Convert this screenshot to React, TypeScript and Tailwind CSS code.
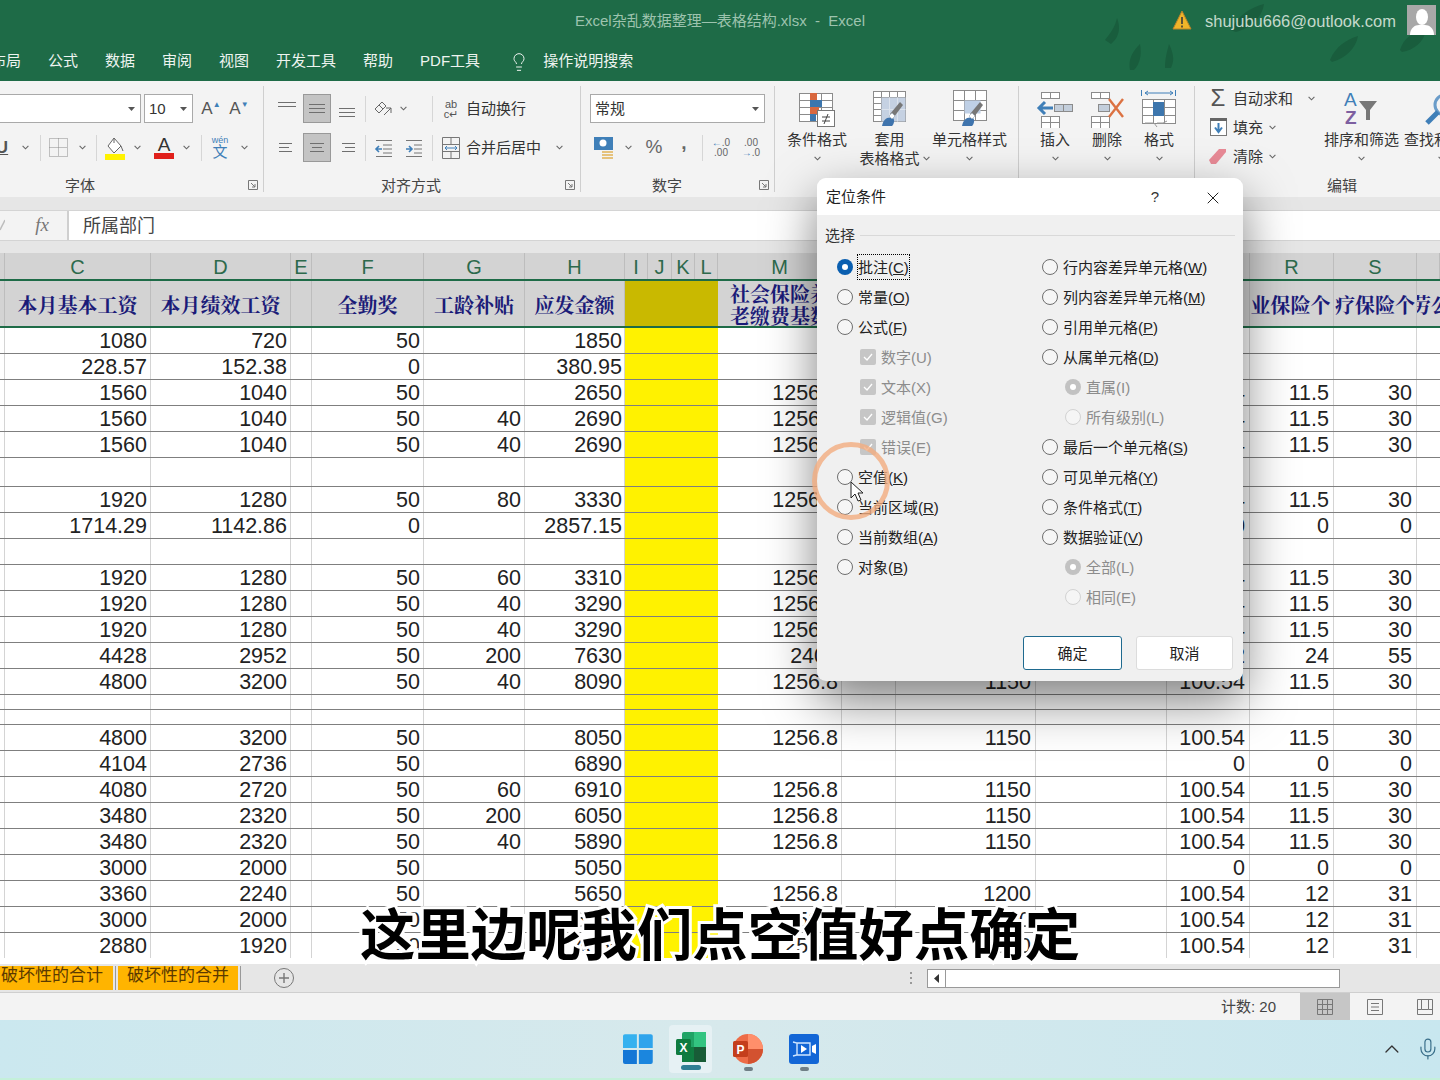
import React from "react";
import { Lightbulb, X, ChevronUp, Mic } from "lucide-react";

const Chev = ({ className = "" }: { className?: string }) => (
    <span className={`flex h-full w-[14px] shrink-0 items-center justify-center ${className}`}>
        <svg width="7" height="5" viewBox="0 0 7 5" fill="none" stroke="#666" strokeWidth="1.1">
            <path d="M.6.8 3.5 3.8 6.4.8" />
        </svg>
    </span>
);

const Sep = ({ className = "" }: { className?: string }) => (
    <span className={`h-[26px] w-px shrink-0 bg-[#d6d6d6] ${className}`} />
);

const Slot = ({ className = "", children }: { className?: string; children?: React.ReactNode }) => (
    <span className={`flex h-full shrink-0 items-center justify-center ${className}`}>{children}</span>
);

const Combo = ({ className = "", text }: { className?: string; text?: string }) => (
    <div className={`flex h-[29px] shrink-0 items-center justify-between border border-[#a9a9a9] bg-white pl-1 pr-[5px] text-[15px] text-[#333] ${className}`}>
        <span className="pt-[2px]">{text}</span>
        <svg width="7" height="4" viewBox="0 0 7 4"><path d="M0 0h7L3.5 4z" fill="#555" /></svg>
    </div>
);

const Lines = ({ rows, y = 0 }: { rows: [number, number][]; y?: number }) => (
    <svg width="20" height="20" viewBox="0 0 20 20" stroke="#6f6f6f" strokeWidth="1">
        {rows.map(([a, b], i) => (
            <line key={i} x1={a} x2={b} y1={y + 3.5 + i * 4} y2={y + 3.5 + i * 4} />
        ))}
    </svg>
);

const Launcher = () => (
    <svg width="10" height="10" viewBox="0 0 10 10" fill="none" stroke="#777" strokeWidth="1">
        <path d="M.5 9.5V.5h9v9zM3 3l4 4M7 4v3H4" />
    </svg>
);

const GroupLabel = ({ text, left }: { text: string; left: string }) => (
    <div className="mt-auto flex h-[14px] items-center pr-[5px] text-[15px] leading-[14px] text-[#444]">
        <span className={`pt-[1px] ${left}`}>{text}</span>
        <span className="ml-auto"><Launcher /></span>
    </div>
);

const GridIcon = ({ x, y, cols, rows, w, h }: { x: number; y: number; cols: number; rows: number; w: number; h: number }) => (
    <g stroke="#8b8b8b" strokeWidth="1" fill="#fff">
        {Array.from({ length: rows }).map((_, r) =>
            Array.from({ length: cols }).map((_, c) => (
                <rect key={`${r}-${c}`} x={x + c * w + 0.5} y={y + r * h + 0.5} width={w} height={h} />
            ))
        )}
    </g>
);

const Brush = ({ x, y }: { x: number; y: number }) => (
    <g transform={`translate(${x} ${y})`}>
        <path d="M0 18c1-7 6-10 11-8 2 2 1 6-1 8z" fill="#3f74ad" />
        <path d="M8 6 18-6l3 3L12 9z" fill="#777" />
        <path d="M7 8l3-3 3 3-3 3z" fill="#fff" stroke="#9ab" strokeWidth=".6" />
    </g>
);

const CondFormatIcon = () => (
    <svg width="38" height="38" viewBox="0 0 38 38">
        <GridIcon x={1} y={3} cols={3} rows={4} w={11} h={7} />
        <rect x="12" y="3" width="7" height="7" fill="#d9683f" />
        <rect x="12" y="10" width="12" height="7" fill="#3d76ad" />
        <rect x="12" y="17" width="9" height="7" fill="#d9683f" />
        <rect x="12" y="24" width="6" height="7" fill="#3d76ad" />
        <rect x="19.5" y="20.5" width="17" height="16" fill="#fff" stroke="#777" />
        <path d="M24 27h8M24 31h8M30 24l-4 10" stroke="#444" fill="none" />
    </svg>
);

const TableStyleIcon = () => (
    <svg width="40" height="38" viewBox="0 0 40 38">
        <GridIcon x={3} y={1} cols={4} rows={5} w={8} h={6} />
        <rect x="11.5" y="7.5" width="24" height="24" fill="#c5d1e2" />
        <path d="M11.5 19.5h24M19.5 7.5v24M27.5 7.5v24" stroke="#dbe2ec" />
        <Brush x={12} y={18} />
    </svg>
);

const CellStyleIcon = () => (
    <svg width="40" height="38" viewBox="0 0 40 38">
        <GridIcon x={3} y={0} cols={3} rows={3} w={11} h={10} />
        <rect x="14.5" y="10.5" width="16" height="13" fill="#bfd0e6" />
        <Brush x={12} y={18} />
    </svg>
);

const InsertIcon = () => (
    <svg width="40" height="38" viewBox="0 0 40 38">
        <GridIcon x={6} y={2} cols={2} rows={1} w={9} h={6} />
        <GridIcon x={6} y={26} cols={2} rows={2} w={9} h={6} />
        <rect x="19.5" y="14.5" width="9" height="7" fill="#c3cedb" stroke="#8b8b8b" />
        <rect x="28.5" y="14.5" width="9" height="7" fill="#c3cedb" stroke="#8b8b8b" />
        <path d="M18 18H4M10 12l-6 6 6 6" stroke="#3f7fb8" strokeWidth="3" fill="none" />
    </svg>
);

const DeleteIcon = () => (
    <svg width="40" height="38" viewBox="0 0 40 38">
        <GridIcon x={4} y={2} cols={2} rows={1} w={9} h={6} />
        <GridIcon x={4} y={26} cols={2} rows={2} w={9} h={6} />
        <rect x="11.5" y="14.5" width="11" height="7" fill="#c3cedb" stroke="#8b8b8b" />
        <path d="m22 9 14 18M36 9 22 27" stroke="#dc7242" strokeWidth="2.4" fill="none" />
    </svg>
);

const FormatIcon = () => (
    <svg width="40" height="38" viewBox="0 0 40 38">
        <path d="M2.5 0v6M36.500 0v6M6 3h28M6 3l3-2M6 3l3 2M34 3l-3-2M34 3l-3 2" stroke="#3f7fb8" fill="none" />
        <GridIcon x={3} y={9} cols={3} rows={3} w={11} h={8} />
        <rect x="14" y="12" width="11" height="14" fill="#3d76ad" />
        <path d="M6 33h9l3 4M18 33h6l4-2" stroke="#999" fill="none" />
    </svg>
);

const BigCol = ({ icon, lines, inline, className = "" }: { icon: React.ReactNode; lines: string[]; inline?: boolean; className?: string }) => (
    <div className={`flex shrink-0 flex-col items-center pt-1 text-[15px] leading-[19px] text-[#333] ${className}`}>
        <div className="mb-[2px] flex h-[38px] items-center justify-center">{icon}</div>
        {lines.map((l) => <span key={l} className="whitespace-nowrap">{l}</span>)}
        {inline ? (
            <span className="flex h-[19px] items-center whitespace-nowrap">表格格式<Chev className="-mr-[14px]" /></span>
        ) : (
            <span className="flex h-[19px] items-center"><Chev /></span>
        )}
    </div>
);

const Ribbon = () => (
    <div className="flex h-[116px] shrink-0 overflow-hidden bg-[#f3f3f3] py-[5px]">
        {/* 字体 */}
        <div className="flex w-[264px] shrink-0 flex-col border-r border-[#cfcfcf] pt-2">
            <div className="flex h-[29px]">
                <Combo className="w-[141px] border-l-0" />
                <Combo className="ml-[3px] w-[49px]" text="10" />
                <Slot className="ml-[5px] w-[26px] text-[17px] text-[#555]">A<sup className="text-[8px] text-[#3f7fb8]">▲</sup></Slot>
                <Slot className="ml-[2px] w-[26px] text-[17px] text-[#555]">A<sup className="text-[8px] text-[#3f7fb8]">▼</sup></Slot>
            </div>
            <div className="mt-[10px] flex h-[29px] items-center">
                <Slot className="-ml-[6px] w-[16px] text-[17px] font-bold text-[#555] underline">U</Slot>
                <Chev className="ml-2" />
                <Sep className="ml-2" />
                <Slot className="ml-[7px] w-[20px]">
                    <svg width="19" height="19" viewBox="0 0 19 19" fill="none" stroke="#8a8a8a" strokeDasharray="1 1">
                        <path d="M.5.500h18v18H.5zM9.500 .5v18M.5 9.500h18" />
                    </svg>
                </Slot>
                <Chev className="ml-[7px]" />
                <Sep className="ml-[7px]" />
                <Slot className="ml-[7px] w-[22px]">
                    <svg width="22" height="24" viewBox="0 0 22 24">
                        <path d="M10 2 4 10l6 7 7-7z" fill="#fff" stroke="#666" />
                        <path d="M10 2v5M17 10l2 5" stroke="#666" fill="none" />
                        <rect x="1" y="18" width="20" height="6" fill="#fff200" />
                    </svg>
                </Slot>
                <Chev className="ml-1" />
                <Slot className="ml-[9px] w-[22px]">
                    <span className="flex flex-col items-center">
                        <span className="text-[19px] font-medium leading-[17px] text-[#333]">A</span>
                        <span className="h-[6px] w-[20px] bg-[#e0201b]" />
                    </span>
                </Slot>
                <Chev className="ml-1" />
                <Sep className="ml-2" />
                <Slot className="ml-[7px] w-[22px]">
                    <span className="flex flex-col items-center text-[#3f7fb8]">
                        <span className="text-[9px] leading-[9px]">wén</span>
                        <span className="text-[15px] leading-[14px]">文</span>
                    </span>
                </Slot>
                <Chev className="ml-[6px]" />
            </div>
            <GroupLabel text="字体" left="ml-[65px]" />
        </div>

        {/* 对齐方式 */}
        <div className="flex w-[317px] shrink-0 flex-col border-r border-[#cfcfcf] pt-2">
            <div className="flex h-[29px] items-center text-[15px] text-[#333]">
                <Slot className="ml-[9px] w-[28px]"><Lines rows={[[1, 19], [1, 19]]} y={0} /></Slot>
                <Slot className="ml-[2px] w-[28px] border border-[#999] bg-[#c4c4c4]"><Lines rows={[[2, 18], [2, 18], [2, 18]]} y={2} /></Slot>
                <Slot className="ml-[2px] w-[28px]"><Lines rows={[[2, 18], [2, 18], [2, 18]]} y={6} /></Slot>
                <Sep className="ml-1" />
                <Slot className="ml-[7px] w-[20px]">
                    <svg width="20" height="20" viewBox="0 0 20 20" fill="none" stroke="#666">
                        <path d="M2 10 9 3l4 4-7 7zM6 6l4 4M11 16l7-7M18 9v5M18 9h-5" />
                    </svg>
                </Slot>
                <Chev className="ml-[3px]" />
                <Sep className="ml-[22px]" />
                <Slot className="ml-2 w-[20px] flex-col text-[11px] leading-[10px] text-[#555]"><span>ab</span><span>c↵</span></Slot>
                <span className="ml-[5px] pt-[2px]">自动换行</span>
            </div>
            <div className="mt-[10px] flex h-[29px] items-center text-[15px] text-[#333]">
                <Slot className="ml-[9px] w-[28px]"><Lines rows={[[2, 15], [2, 12], [2, 15]]} y={2} /></Slot>
                <Slot className="ml-[2px] w-[28px] border border-[#999] bg-[#c4c4c4]"><Lines rows={[[3, 17], [5, 15], [3, 17]]} y={2} /></Slot>
                <Slot className="ml-[2px] w-[28px]"><Lines rows={[[5, 18], [8, 18], [5, 18]]} y={2} /></Slot>
                <Sep className="ml-1" />
                <Slot className="ml-2 w-[20px]">
                    <svg width="20" height="20" viewBox="0 0 20 20" fill="none">
                        <path d="M2 2.500h16M9 7h9M9 11h9M9 15h9M2 18.500h16" stroke="#777" />
                        <path d="M8 11H2M5 8l-3 3 3 3" stroke="#3f7fb8" strokeWidth="1.600" />
                    </svg>
                </Slot>
                <Slot className="ml-[10px] w-[20px]">
                    <svg width="20" height="20" viewBox="0 0 20 20" fill="none">
                        <path d="M2 2.500h16M10 7h8M10 11h8M10 15h8M2 18.500h16" stroke="#777" />
                        <path d="M2 11h6M5 8l3 3-3 3" stroke="#3f7fb8" strokeWidth="1.600" />
                    </svg>
                </Slot>
                <Sep className="ml-2" />
                <Slot className="ml-2 w-[20px]">
                    <svg width="20" height="24" viewBox="0 0 20 24" fill="none" stroke="#777">
                        <path d="M1.500 1.500h17v21h-17zM1.500 8.500h17M1.500 15.500h17M10 1.500v7M10 15.500v7" />
                        <path d="M4 12h12M6 10l-2 2 2 2M14 10l2 2-2 2" stroke="#3f7fb8" />
                    </svg>
                </Slot>
                <span className="ml-[5px] pt-[2px]">合并后居中</span>
                <Chev className="ml-[11px]" />
            </div>
            <GroupLabel text="对齐方式" left="ml-[117px]" />
        </div>

        {/* 数字 */}
        <div className="flex w-[194px] shrink-0 flex-col border-r border-[#cfcfcf] pt-2">
            <Combo className="ml-[9px] w-[175px]" text="常规" />
            <div className="mt-[10px] flex h-[29px] items-center text-[#666]">
                <Slot className="ml-3 w-[22px]">
                    <svg width="22" height="24" viewBox="0 0 22 24">
                        <rect x="1" y="1" width="19" height="13" fill="#3f7fb8" />
                        <circle cx="10" cy="7" r="3.500" fill="#fff" />
                        <path d="M9 15h11v2H9zM9 18h11v2H9zM9 21h11v2H9z" fill="#e5c27c" />
                    </svg>
                </Slot>
                <Chev className="ml-[6px]" />
                <Slot className="ml-[9px] w-[20px] text-[19px]">%</Slot>
                <Slot className="ml-[10px] w-[20px] pb-2 text-[19px] font-bold">,</Slot>
                <Sep className="ml-2" />
                <Slot className="ml-2 w-[20px] flex-col text-[10px] leading-[10px]"><span><b className="text-[#3f7fb8]">←</b>.0</span><span>.00</span></Slot>
                <Slot className="ml-[10px] w-[20px] flex-col text-[10px] leading-[10px]"><span>.00</span><span><b className="text-[#3f7fb8]">→</b>.0</span></Slot>
            </div>
            <GroupLabel text="数字" left="ml-[71px]" />
        </div>

        {/* 样式 */}
        <div className="flex w-[244px] shrink-0 border-r border-[#cfcfcf]">
            <BigCol className="ml-3 w-[60px]" icon={<CondFormatIcon />} lines={["条件格式"]} />
            <BigCol className="ml-[5px] w-[75px]" icon={<TableStyleIcon />} lines={["套用"]} inline />
            <BigCol className="ml-[5px] w-[75px]" icon={<CellStyleIcon />} lines={["单元格样式"]} />
        </div>

        {/* 单元格 */}
        <div className="flex w-[176px] shrink-0 border-r border-[#cfcfcf] pl-[10px]">
            <BigCol className="w-[52px]" icon={<InsertIcon />} lines={["插入"]} />
            <BigCol className="w-[52px]" icon={<DeleteIcon />} lines={["删除"]} />
            <BigCol className="w-[52px]" icon={<FormatIcon />} lines={["格式"]} />
        </div>

        {/* 编辑 */}
        <div className="relative flex shrink-0 flex-col">
            <div className="flex">
                <div className="flex w-[129px] shrink-0 flex-col gap-[5px] text-[15px] text-[#333]">
                    <div className="flex h-[24px] items-center">
                        <Slot className="ml-3 w-[22px] text-[24px] leading-none text-[#555]">Σ</Slot>
                        <span className="ml-1 pt-[2px]">自动求和</span>
                        <Chev className="ml-[11px]" />
                    </div>
                    <div className="flex h-[24px] items-center">
                        <Slot className="ml-3 w-[22px]">
                            <svg width="17" height="18" viewBox="0 0 17 18">
                                <rect x=".5" y=".5" width="16" height="17" fill="#fff" stroke="#777" />
                                <rect x="0" y="0" width="17" height="3" fill="#666" />
                                <path d="M8.500 5v8M5 9.500 8.500 14 12 9.500" stroke="#3f7fb8" strokeWidth="2" fill="none" />
                            </svg>
                        </Slot>
                        <span className="ml-1 pt-[2px]">填充</span>
                        <Chev className="ml-[2px]" />
                    </div>
                    <div className="flex h-[24px] items-center">
                        <Slot className="ml-3 w-[22px]">
                            <svg width="18" height="17" viewBox="0 0 18 17">
                                <path d="M10 1h7v3L7 16H2L0 12z" fill="#e88a96" />
                            </svg>
                        </Slot>
                        <span className="ml-1 pt-[2px]">清除</span>
                        <Chev className="ml-[2px]" />
                    </div>
                </div>
                <BigCol
                    className="w-[75px]"
                    lines={["排序和筛选"]}
                    icon={
                        <svg width="38" height="36" viewBox="0 0 38 36">
                            <text x="1" y="15" fontSize="19" fill="#3f7fb8">A</text>
                            <text x="2" y="33" fontSize="19" fontWeight="700" fill="#7d5fa0">Z</text>
                            <path d="M16 10h18l-7 9v10h-4V19z" fill="#777" />
                        </svg>
                    }
                />
                <BigCol
                    className="ml-[5px] w-[75px]"
                    lines={["查找和选择"]}
                    icon={
                        <svg width="34" height="34" viewBox="0 0 34 34" fill="none">
                            <circle cx="20" cy="13" r="10" stroke="#6a9cc9" strokeWidth="3" />
                            <path d="M13 20 2 31" stroke="#3f7fb8" strokeWidth="5" />
                        </svg>
                    }
                />
            </div>
            <div className="mt-auto flex h-[14px] items-center text-[15px] leading-[14px] text-[#444]">
                <span className="ml-[132px] pt-[1px]">编辑</span>
            </div>
        </div>
    </div>
);

const TitleBar = () => (
    <div className="relative flex h-[81px] shrink-0 flex-col bg-[#1e6b47]">
        {/* 主题的叶子底纹 */}
        <svg width="340" height="70" viewBox="0 0 340 70" fill="#195d3d" className="absolute left-[1100px] top-0">
            <path d="M5 40c8-10 10-14 12-22 4 10 2 20-6 26zM30 70c-2-10 2-18 10-26 2 10 0 20-6 26zM65 68c0-10 2-16 4-24 4 8 6 16 2 24zM130 30c10-16 20-22 34-26-2 14-14 24-28 28zM230 60c6-14 16-20 28-24-2 12-12 22-26 26zM300 50c4-12 12-18 26-20-2 12-12 20-24 22z" />
        </svg>
        <div className="relative grid h-[40px] grid-cols-[1fr_auto_1fr] items-center">
            <div />
            <div className="pt-[2px] text-[15px] text-[#9dc3ae]">Excel杂乱数据整理—表格结构.xlsx&nbsp; - &nbsp;Excel</div>
            <div className="flex items-center justify-end pr-1">
                <svg width="20" height="20" viewBox="0 0 20 20" className="mr-[13px]">
                    <path d="M10 1 19 19H1z" fill="#f0b429" stroke="#b9822a" />
                    <path d="M10 7v7M10 15.500v2" stroke="#3a3a3a" strokeWidth="1.600" />
                </svg>
                <span className="pt-[2px] text-[16.5px] text-[#c4d9cc]">shujubu666@outlook.com</span>
                <div className="ml-[11px] flex h-[30px] w-[29px] items-end justify-center overflow-hidden bg-[#a8a8a8]">
                    <svg width="26" height="27" viewBox="0 0 26 27" fill="#fff">
                        <ellipse cx="13" cy="9" rx="6" ry="8" />
                        <path d="M1 27c0-7 5-10 9-10h6c4 0 9 3 9 10z" />
                    </svg>
                </div>
            </div>
        </div>
        <div className="relative -ml-[39px] flex h-[41px] items-center gap-[27px] pt-[2px] text-[15px] text-[#eef4f0]">
            {["页面布局", "公式", "数据", "审阅", "视图", "开发工具", "帮助", "PDF工具"].map((t) => (
                <span key={t} className="whitespace-nowrap">{t}</span>
            ))}
            <Lightbulb size={20} strokeWidth={1.2} className="ml-[2px] text-[#eef4f0]" />
            <span className="-ml-[13px] whitespace-nowrap">操作说明搜索</span>
        </div>
    </div>
);

const FormulaBar = () => (
    <div className="flex h-[56px] shrink-0 flex-col justify-center bg-[#e6e6e6]">
        <div className="flex h-[31px] border-y border-[#d4d4d4] bg-[#f3f3f3]">
            <div className="flex w-[67px] items-center pr-[18px]">
                <svg width="5" height="12" viewBox="0 0 5 12" fill="none" stroke="#bdbdbd" strokeWidth="1.500"><path d="M0 11 5 1" /></svg>
                <span className="ml-auto font-['Liberation_Serif',serif] text-[19px] italic text-[#777]">fx</span>
            </div>
            <div className="flex-1 border-l-2 border-[#cfcfcf] bg-white pl-[14px] text-[18px] leading-[31px] text-[#444]">所属部门</div>
        </div>
    </div>
);

const colLetters = ["C", "D", "E", "F", "G", "H", "I", "J", "K", "L", "M", "N", "O", "P", "Q", "R", "S", ""];

// [行高, C, D, F, G, H, M, O, Q, R, S]
type Row = [string, ...string[]];
const full = ["1256.8", "1150", "100.54", "11.5", "30"];
const zero = ["", "", "0", "0", "0"];
const high = ["1256.8", "1200", "100.54", "12", "31"];
const rows: Row[] = [
    ["h-[26px]", "1080", "720", "50", "", "1850"],
    ["h-[26px]", "228.57", "152.38", "0", "", "380.95"],
    ["h-[26px]", "1560", "1040", "50", "", "2650", ...full],
    ["h-[26px]", "1560", "1040", "50", "40", "2690", ...full],
    ["h-[26px]", "1560", "1040", "50", "40", "2690", ...full],
    ["h-[29px]"],
    ["h-[26px]", "1920", "1280", "50", "80", "3330", ...full],
    ["h-[26px]", "1714.29", "1142.86", "0", "", "2857.15", ...zero],
    ["h-[26px]"],
    ["h-[26px]", "1920", "1280", "50", "60", "3310", ...full],
    ["h-[26px]", "1920", "1280", "50", "40", "3290", ...full],
    ["h-[26px]", "1920", "1280", "50", "40", "3290", ...full],
    ["h-[26px]", "4428", "2952", "50", "200", "7630", "2400", "2208", "192", "24", "55"],
    ["h-[26px]", "4800", "3200", "50", "40", "8090", ...full],
    ["h-[15px]"],
    ["h-[15px]"],
    ["h-[26px]", "4800", "3200", "50", "", "8050", ...full],
    ["h-[26px]", "4104", "2736", "50", "", "6890", ...zero],
    ["h-[26px]", "4080", "2720", "50", "60", "6910", ...full],
    ["h-[26px]", "3480", "2320", "50", "200", "6050", ...full],
    ["h-[26px]", "3480", "2320", "50", "40", "5890", ...full],
    ["h-[26px]", "3000", "2000", "50", "", "5050", ...zero],
    ["h-[26px]", "3360", "2240", "50", "", "5650", ...high],
    ["h-[26px]", "3000", "2000", "50", "", "5050", ...high],
    ["h-[32px] pb-[6px]", "2880", "1920", "50", "", "4850", ...high],
];

const Num = ({ v, pr = "pr-[3px]" }: { v?: string; pr?: string }) => (
    <div className={`flex items-center justify-end overflow-hidden border-r border-[#d4d4d4] pt-[2px] ${pr}`}>{v}</div>
);

const headCell = "flex items-center justify-center overflow-hidden whitespace-nowrap border-r border-[#bdbdbd] pt-[2px]";

const Sheet = () => (
    <div className="flex h-[711px] shrink-0 flex-col overflow-hidden bg-white">
        <div className="grid h-[28px] shrink-0 grid-cols-[5px_146px_140px_21px_112px_101px_100px_23px_24px_23px_23px_124px_54px_140px_131px_83px_84px_83px_23px] border-b-2 border-[#1e6b47] bg-[#d3d3d3] text-[20px] leading-none text-[#2d6a4c]">
            <div className="border-r border-[#bdbdbd]" />
            {colLetters.map((l, i) => <div key={i} className={headCell}>{l}</div>)}
        </div>
        <div className="grid h-[47px] shrink-0 grid-cols-[5px_146px_140px_21px_112px_101px_100px_93px_124px_54px_140px_131px_83px_84px_83px_23px] border-b-2 border-[#1e6b47] bg-[#d3d3d3] font-['Noto_Serif_CJK_SC','Noto_Sans_CJK_SC',serif] text-[20px] font-bold leading-[22px] text-[#1b1b78]">
            <div className="border-r border-[#bdbdbd]" />
            <div className={headCell}>本月基本工资</div>
            <div className={headCell}>本月绩效工资</div>
            <div className={headCell} />
            <div className={headCell}>全勤奖</div>
            <div className={headCell}>工龄补贴</div>
            <div className={headCell}>应发金额</div>
            <div className="bg-[#c9b900]" />
            <div className={`${headCell} flex-col items-start pl-3`}><span>社会保险养</span><span>老缴费基数</span></div>
            <div className={headCell} />
            <div className={headCell} />
            <div className={headCell} />
            <div className={headCell} />
            <div className={`${headCell} pr-[2px]`}>业保险个</div>
            <div className={headCell}>疗保险个</div>
            <div className={`${headCell} justify-start border-r-0 indent-[-6px]`}>劳公</div>
        </div>
        {rows.map(([h, c, d, f, g, hh, m, o, q, r, s], i) => (
            <div
                key={i}
                className={`grid shrink-0 grid-cols-[5px_146px_140px_21px_112px_101px_100px_93px_124px_54px_140px_131px_83px_84px_83px_23px] border-b border-[#7f7f7f] text-[21.5px] leading-none text-[#222] ${h}`}
            >
                <div className="border-r border-[#d4d4d4]" />
                <Num v={c} />
                <Num v={d} />
                <Num />
                <Num v={f} />
                <Num v={g} />
                <Num v={hh} pr="pr-[2px]" />
                <div className="bg-[#fff200]" />
                <Num v={m} />
                <Num />
                <Num v={o} pr="pr-[4px]" />
                <Num />
                <Num v={q} pr="pr-[4px]" />
                <Num v={r} pr="pr-[4px]" />
                <Num v={s} pr="pr-[4px]" />
                <div />
            </div>
        ))}
    </div>
);

const TabBar = () => (
    <div className="flex h-[29px] shrink-0 items-center border-b border-[#cfcfcf] bg-[#e6e6e6] text-[17px] text-[#5b3a00]">
        <div className="mt-[2px] flex h-[24px] w-[113px] self-start bg-[#ffb400] pl-[1px] leading-[20px]">破坏性的合计</div>
        <div className="ml-[2px] mt-[2px] h-[24px] w-px self-start bg-[#999]" />
        <div className="ml-[2px] mt-[2px] flex h-[24px] w-[120px] justify-center self-start bg-[#ffb400] leading-[20px]">破坏性的合并</div>
        <div className="ml-[2px] mt-[2px] h-[24px] w-px self-start bg-[#999]" />
        <svg width="20" height="20" viewBox="0 0 20 20" fill="none" stroke="#777" className="ml-[33px]">
            <circle cx="10" cy="10" r="9.500" />
            <path d="M10 5v10M5 10h10" strokeWidth="1.400" />
        </svg>
        <div className="ml-[616px] flex flex-col gap-[3px]">
            <span className="h-[2px] w-[2px] bg-[#999]" />
            <span className="h-[2px] w-[2px] bg-[#999]" />
            <span className="h-[2px] w-[2px] bg-[#999]" />
        </div>
        <div className="ml-[15px] flex h-[19px] w-[413px] border border-[#999] bg-white">
            <div className="flex w-[18px] items-center justify-center border-r border-[#999]">
                <svg width="5" height="9" viewBox="0 0 5 9"><path d="M5 0v9L0 4.500z" fill="#333" /></svg>
            </div>
        </div>
    </div>
);

const StatusBar = () => (
    <div className="flex h-[27px] shrink-0 items-center justify-end bg-[#f3f3f3] text-[15px] text-[#444]">
        <span className="pt-[2px]">计数: 20</span>
        <div className="ml-6 flex h-full w-[50px] items-center justify-center bg-[#c6c6c6]">
            <svg width="16" height="16" viewBox="0 0 16 16" fill="none" stroke="#777">
                <path d="M.5.500h15v15H.5zM5.500.5v15M10.500.5v15M.5 5.500h15M.5 10.500h15" />
            </svg>
        </div>
        <div className="flex h-full w-[50px] items-center justify-center">
            <svg width="16" height="16" viewBox="0 0 16 16" fill="none" stroke="#777">
                <path d="M.5.500h15v15H.5zM4 4.500h8M4 8h8M4 11.500h8" />
            </svg>
        </div>
        <div className="-mr-[10px] flex h-full w-[50px] items-center justify-center">
            <svg width="16" height="16" viewBox="0 0 16 16" fill="none" stroke="#777">
                <path d="M.5.500h15v15H.5zM.5 10.500h4v-10M11.500 .5v10h4M4.500 10.500h7" />
            </svg>
        </div>
    </div>
);

const Dot = () => <span className="mx-auto mt-[3px] block h-[4px] w-[9px] rounded-full bg-[#6f7f86]" />;

const Taskbar = () => (
    <div className="flex h-[60px] shrink-0 items-center border-b-2 border-[#c4f0da] bg-gradient-to-r from-[#cbe8ef] via-[#d7e9ec] to-[#c8e7ef] pl-[623px]">
        <svg width="30" height="30" viewBox="0 0 30 30">
            <path d="M0 2a2 2 0 0 1 2-2h12v14H0z" fill="#35b1ef" />
            <path d="M16 0h12a2 2 0 0 1 2 2v12H16z" fill="#2ea4ec" />
            <path d="M0 16h14v14H2a2 2 0 0 1-2-2z" fill="#1477d6" />
            <path d="M16 16h14v12a2 2 0 0 1-2 2H16z" fill="#1b86de" />
        </svg>
        <div className="ml-[16px] flex h-[48px] w-[44px] flex-col items-center rounded-[4px] bg-[#e6f1f4] pt-[7px]">
            <svg width="30" height="30" viewBox="0 0 30 30">
                <rect x="6" y="0" width="24" height="30" rx="2" fill="#21a366" />
                <rect x="18" y="0" width="12" height="15" fill="#33c481" />
                <rect x="6" y="15" width="12" height="15" fill="#107c41" />
                <rect x="18" y="15" width="12" height="15" fill="#185c37" />
                <rect x="0" y="7" width="15" height="16" rx="1.500" fill="#0f7b3f" />
                <text x="7.500" y="19.500" textAnchor="middle" fontSize="12" fontWeight="700" fill="#fff">X</text>
            </svg>
            <span className="mt-[3px] h-[5px] w-[20px] rounded-full bg-[#2f7f94]" />
        </div>
        <div className="ml-[21px] flex flex-col pt-[7px]">
            <svg width="30" height="30" viewBox="0 0 30 30">
                <circle cx="15" cy="15" r="15" fill="#ed6c47" />
                <path d="M15 0a15 15 0 0 1 15 15H15z" fill="#ff8f6b" />
                <path d="M15 15h15a15 15 0 0 1-15 15z" fill="#d35230" />
                <rect x="0" y="7" width="15" height="16" rx="1.500" fill="#c43e1c" />
                <text x="7.500" y="19.500" textAnchor="middle" fontSize="12" fontWeight="700" fill="#fff">P</text>
            </svg>
            <Dot />
        </div>
        <div className="ml-[26px] flex flex-col pt-[7px]">
            <svg width="30" height="30" viewBox="0 0 30 30">
                <rect width="30" height="30" rx="3" fill="#1266d6" />
                <path d="M8 9h13v12H8zM4 8l4 1v12l-4 1" fill="none" stroke="#cfe6ff" strokeWidth="1.400" />
                <path d="M12 11v8l6-4z" fill="#fff" />
                <path d="M23 12l4-2v10l-4-2z" fill="#fff" />
            </svg>
            <Dot />
        </div>
        <ChevronUp size={24} strokeWidth={1.3} className="ml-[561px] text-[#333]" />
        <Mic size={24} strokeWidth={1.2} className="ml-[12px] text-[#3a6f8a]" />
    </div>
);

type Opt = { t: string; k: string; kind: "radio" | "check" | "sub"; on?: boolean; focus?: boolean };

const leftOpts: Opt[] = [
    { t: "批注", k: "C", kind: "radio", on: true, focus: true },
    { t: "常量", k: "O", kind: "radio" },
    { t: "公式", k: "F", kind: "radio" },
    { t: "数字", k: "U", kind: "check" },
    { t: "文本", k: "X", kind: "check" },
    { t: "逻辑值", k: "G", kind: "check" },
    { t: "错误", k: "E", kind: "check" },
    { t: "空值", k: "K", kind: "radio" },
    { t: "当前区域", k: "R", kind: "radio" },
    { t: "当前数组", k: "A", kind: "radio" },
    { t: "对象", k: "B", kind: "radio" },
];

const rightOpts: Opt[] = [
    { t: "行内容差异单元格", k: "W", kind: "radio" },
    { t: "列内容差异单元格", k: "M", kind: "radio" },
    { t: "引用单元格", k: "P", kind: "radio" },
    { t: "从属单元格", k: "D", kind: "radio" },
    { t: "直属", k: "I", kind: "sub", on: true },
    { t: "所有级别", k: "L", kind: "sub" },
    { t: "最后一个单元格", k: "S", kind: "radio" },
    { t: "可见单元格", k: "Y", kind: "radio" },
    { t: "条件格式", k: "T", kind: "radio" },
    { t: "数据验证", k: "V", kind: "radio" },
    { t: "全部", k: "L", kind: "sub", on: true },
    { t: "相同", k: "E", kind: "sub" },
];

const OptRow = ({ o }: { o: Opt }) => {
    const disabled = o.kind !== "radio";
    return (
        <div className={`flex h-[30px] items-center gap-[5px] ${disabled ? "pl-[23px] text-[#8c8c8c]" : "text-[#222]"}`}>
            {o.kind === "check" ? (
                <span className="flex h-[16px] w-[16px] items-center justify-center rounded-[2px] bg-[#c6c6c6]">
                    <svg width="10" height="8" viewBox="0 0 10 8" fill="none" stroke="#fff" strokeWidth="1.300"><path d="m1 4 3 3 5-6" /></svg>
                </span>
            ) : o.kind === "sub" ? (
                <span className={`flex h-[16px] w-[16px] items-center justify-center rounded-full ${o.on ? "bg-[#c2c2c2]" : "border border-[#d2d2d2] bg-[#f5f5f5]"}`}>
                    {o.on && <span className="h-[6px] w-[6px] rounded-full bg-white" />}
                </span>
            ) : (
                <span className={`flex h-[16px] w-[16px] items-center justify-center rounded-full ${o.on ? "bg-[#0a5fb0]" : "border border-[#6e6e6e] bg-[#f6f6f6]"}`}>
                    {o.on && <span className="h-[6px] w-[6px] rounded-full bg-white" />}
                </span>
            )}
            <span className={`whitespace-nowrap pt-[2px] ${o.focus ? "outline-1 outline-dotted outline-black" : ""}`}>
                {o.t}({disabled ? o.k : <u>{o.k}</u>})
            </span>
        </div>
    );
};

const Dialog = () => (
    <div className="absolute left-[817px] top-[178px] flex h-[503px] w-[426px] flex-col overflow-hidden rounded-[9px] bg-[#f0f0f0] text-[15px] shadow-[0_20px_50px_rgba(0,0,0,0.5)]">
        <div className="flex h-[37px] shrink-0 items-center bg-white pl-[9px] pr-[20px] pt-[2px] text-[#222]">
            <span>定位条件</span>
            <span className="ml-auto text-[#333]">?</span>
            <X size={20} strokeWidth={1.2} className="ml-[44px] text-[#222]" />
        </div>
        <div className="mt-[10px] flex h-[20px] shrink-0 items-center pl-2 pr-2 text-[#333]">
            <span className="pt-[2px]">选择</span>
            <span className="ml-[5px] h-px flex-1 bg-[#d9d9d9]" />
        </div>
        <div className="mt-[7px] flex">
            <div className="w-[225px] shrink-0 pl-5">
                {leftOpts.map((o) => <OptRow key={o.t} o={o} />)}
            </div>
            <div>
                {rightOpts.map((o) => <OptRow key={o.t} o={o} />)}
            </div>
        </div>
        <div className="mb-[11px] mt-auto flex justify-end gap-[14px] pr-[10px] text-[#222]">
            <div className="flex h-[34px] w-[99px] items-center justify-center rounded-[3px] border-[1.5px] border-[#1f6a8f] bg-white pt-[2px]">确定</div>
            <div className="flex h-[34px] w-[97px] items-center justify-center rounded-[3px] border border-[#dcdcdc] bg-white pt-[2px]">取消</div>
        </div>
    </div>
);

export default function App() {
    return (
        <div className="relative flex h-[1080px] w-[1440px] flex-col overflow-hidden bg-white font-['Liberation_Sans','Noto_Sans_CJK_SC',sans-serif]">
            <TitleBar />
            <Ribbon />
            <FormulaBar />
            <Sheet />
            <TabBar />
            <StatusBar />
            <Taskbar />
            <Dialog />

            {/* 鼠标高亮圈 */}
            <div className="absolute left-[812px] top-[442px] h-[78px] w-[78px] rounded-full border-[5px] border-[#f2ac80]/80" />
            <svg width="16" height="22" viewBox="0 0 16 22" className="absolute left-[850px] top-[481px]">
                <path d="M1 1v16l4-4 3 7 3-1-3-7h5z" fill="#fff" stroke="#222" />
            </svg>

            {/* 字幕 */}
            <div className="absolute left-[360px] top-[903px] whitespace-nowrap text-[55.4px] font-bold leading-[66px] text-black [-webkit-text-stroke:6px_white] [paint-order:stroke_fill]">
                这里边呢我们点空值好点确定
            </div>
        </div>
    );
}
